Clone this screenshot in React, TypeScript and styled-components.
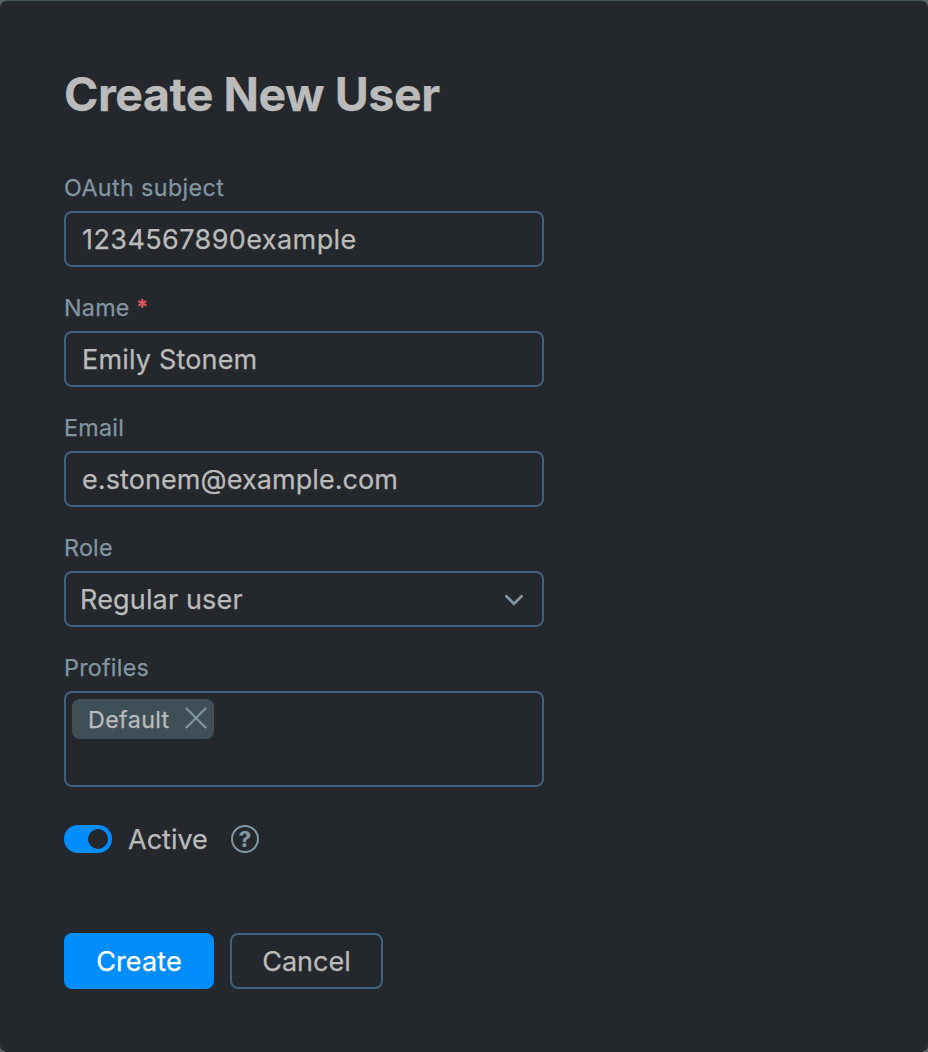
import React from "react";
import styled, { createGlobalStyle } from "styled-components";

const GlobalStyle = createGlobalStyle`
  * { box-sizing: border-box; }
  html, body { margin: 0; padding: 0; background: #5d6468; }
`;

const Panel = styled.main`
  width: 928px;
  height: 1052px;
  padding: 63px 64px;
  overflow: hidden;
  border-top: 1px solid #44545c;
  border-radius: 7px;
  background: #24282c;
  color: #bbbbbb;
  font-family: Inter, "Liberation Sans", sans-serif;
  font-size: 27px;
  font-weight: 400;
  -webkit-text-stroke-width: 0.25px;
`;

const Title = styled.h1`
  margin: 0 0 47px;
  height: 60px;
  line-height: 60px;
  font-size: 46.5px;
  font-weight: 700;
  letter-spacing: -0.45px;
  white-space: nowrap;
`;

const Form = styled.form`
  display: flex;
  flex-direction: column;
`;

const Field = styled.div`
  display: flex;
  flex-direction: column;
  width: 480px;
  margin-bottom: 24px;
`;

const Label = styled.label<{ $spacing?: number }>`
  height: 34px;
  margin-bottom: 6px;
  line-height: 34px;
  font-size: 23.3px;
  letter-spacing: ${(p) => p.$spacing ?? 0.25}px;
  color: #8195a2;
  white-space: nowrap;
`;

const Required = styled.span`
  color: #e25563;
  font-size: 21px;
  font-weight: 600;
  line-height: 1;
  vertical-align: 1px;
`;

const Input = styled.input<{ $spacing?: number }>`
  width: 100%;
  height: 56px;
  padding: 0 16px;
  border: 2px solid #3f627f;
  border-radius: 8px;
  outline: none;
  background: transparent;
  color: inherit;
  font: inherit;
  letter-spacing: ${(p) => p.$spacing ?? 0}px;
`;

const Select = styled.div`
  display: flex;
  align-items: center;
  justify-content: space-between;
  height: 56px;
  padding: 0 18px 0 14px;
  border: 2px solid #3f627f;
  border-radius: 8px;
`;

const Text = styled.span<{ $spacing?: number }>`
  letter-spacing: ${(p) => p.$spacing ?? 0}px;
  white-space: nowrap;
`;

const TagBox = styled.div`
  height: 96px;
  padding: 6px;
  border: 2px solid #3f627f;
  border-radius: 8px;
`;

const Tag = styled.div`
  display: flex;
  align-items: center;
  justify-content: space-between;
  width: 142px;
  height: 40px;
  padding: 0 7px 0 16px;
  border-radius: 8px;
  background: #3f4f58;
  font-size: 23.3px;
`;

const CloseIcon = styled.svg`
  margin-bottom: 2px;
`;

const Chevron = styled.svg`
  margin-top: 1px;
`;

const ActiveRow = styled.div`
  display: flex;
  align-items: center;
  height: 56px;
`;

const Switch = styled.span`
  display: flex;
  align-items: center;
  justify-content: flex-end;
  width: 48px;
  height: 28px;
  margin-right: 16px;
  padding: 4px;
  border-radius: 14px;
  background: #008eff;
`;

const Knob = styled.span`
  width: 20px;
  height: 20px;
  border-radius: 50%;
  background: #24282c;
`;

const ActiveLabel = styled.span`
  width: 103px;
`;

const Help = styled.span`
  display: flex;
  align-items: center;
  justify-content: center;
  width: 28px;
  height: 28px;
  border: 2px solid #8195a2;
  border-radius: 50%;
  color: #8195a2;
  font-size: 22px;
  font-weight: 700;
  line-height: 24px;
`;

const Actions = styled.div`
  display: flex;
  gap: 16px;
  margin-top: 66px;
`;

const Button = styled.button<{ $primary?: boolean }>`
  width: ${(p) => (p.$primary ? 150 : 153)}px;
  height: 56px;
  padding: 0;
  border: 2px solid ${(p) => (p.$primary ? "#008eff" : "#3f627f")};
  border-radius: 8px;
  background: ${(p) => (p.$primary ? "#008eff" : "transparent")};
  color: ${(p) => (p.$primary ? "#ffffff" : "#bbbbbb")};
  font: inherit;
`;

export default function App() {
  return (
    <>
      <GlobalStyle />
      <Panel>
        <Title>Create New User</Title>
        <Form>
          <Field>
            <Label $spacing={0.38}>OAuth subject</Label>
            <Input $spacing={0.42} defaultValue="1234567890example" />
          </Field>
          <Field>
            <Label>
              Name <Required>*</Required>
            </Label>
            <Input $spacing={0.18} defaultValue="Emily Stonem" />
          </Field>
          <Field>
            <Label>Email</Label>
            <Input $spacing={0.08} defaultValue="e.stonem@example.com" />
          </Field>
          <Field>
            <Label>Role</Label>
            <Select>
              <Text $spacing={0.16}>Regular user</Text>
              <Chevron width="20" height="14" viewBox="0 0 20 14" fill="none">
                <path d="M2.4 3.2 10 10.8l7.6-7.6" stroke="#8195a2" strokeWidth="2.7" strokeLinecap="round" />
              </Chevron>
            </Select>
          </Field>
          <Field>
            <Label>Profiles</Label>
            <TagBox>
              <Tag>
                <Text $spacing={0.35}>Default</Text>
                <CloseIcon width="22" height="22" viewBox="0 0 22 22" fill="none">
                  <path d="M1.5 1.5 20.5 20.5M20.5 1.5 1.5 20.5" stroke="#8195a2" strokeWidth="2.2" strokeLinecap="round" />
                </CloseIcon>
              </Tag>
            </TagBox>
          </Field>
          <ActiveRow>
            <Switch>
              <Knob />
            </Switch>
            <ActiveLabel>
              <Text>Active</Text>
            </ActiveLabel>
            <Help>?</Help>
          </ActiveRow>
          <Actions>
            <Button type="button" $primary>
              <Text $spacing={0.1}>Create</Text>
            </Button>
            <Button type="button">
              <Text>Cancel</Text>
            </Button>
          </Actions>
        </Form>
      </Panel>
    </>
  );
}
